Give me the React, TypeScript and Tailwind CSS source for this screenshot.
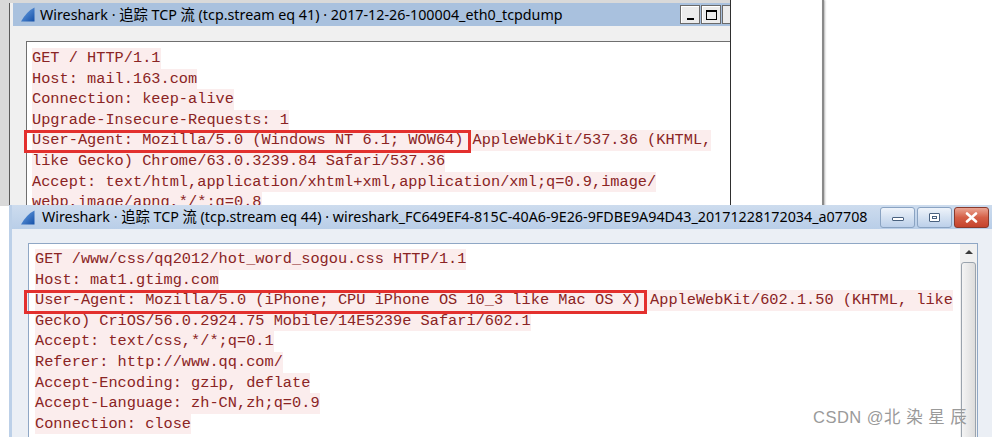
import React from "react";

const firstLines = [
  "GET / HTTP/1.1",
  "Host: mail.163.com",
  "Connection: keep-alive",
  "Upgrade-Insecure-Requests: 1",
  "User-Agent: Mozilla/5.0 (Windows NT 6.1; WOW64) AppleWebKit/537.36 (KHTML,",
  "like Gecko) Chrome/63.0.3239.84 Safari/537.36",
  "Accept: text/html,application/xhtml+xml,application/xml;q=0.9,image/",
  "webp,image/apng,*/*;q=0.8",
];

const secondLines = [
  "GET /www/css/qq2012/hot_word_sogou.css HTTP/1.1",
  "Host: mat1.gtimg.com",
  "User-Agent: Mozilla/5.0 (iPhone; CPU iPhone OS 10_3 like Mac OS X) AppleWebKit/602.1.50 (KHTML, like",
  "Gecko) CriOS/56.0.2924.75 Mobile/14E5239e Safari/602.1",
  "Accept: text/css,*/*;q=0.1",
  "Referer: http://www.qq.com/",
  "Accept-Encoding: gzip, deflate",
  "Accept-Language: zh-CN,zh;q=0.9",
  "Connection: close",
];

function SharkFin() {
  return (
    <svg width="15" height="15" viewBox="0 0 15 15">
      <defs>
        <linearGradient id="fin" x1="0" y1="0" x2="1" y2="1">
          <stop offset="0" stopColor="#6fa6e6" />
          <stop offset="1" stopColor="#1550a8" />
        </linearGradient>
      </defs>
      <path d="M1 14.5 L14.5 14.5 L14.5 0.5 Q7 4 1 14.5 Z" fill="url(#fin)" />
    </svg>
  );
}

function Stream({ lines }: { lines: string[] }) {
  return (
    <div className="font-['Liberation_Mono',monospace] text-[15.3px] leading-[20.6px] text-[#8a2424]">
      {lines.map((l, i) => (
        <div key={i} className="w-fit whitespace-pre bg-[#fbeded]">
          {l}
        </div>
      ))}
    </div>
  );
}

function ClassicButton({ kind }: { kind: "min" | "max" }) {
  return (
    <div className="flex h-[19px] w-[20px] items-center justify-center border border-[#6a6a6a] bg-[#ececec] shadow-[inset_1px_1px_0_#ffffff]">
      {kind === "min" ? (
        <div className="mt-[9px] h-[2px] w-[7px] bg-black" />
      ) : (
        <div className="h-[10px] w-[11px] border border-t-2 border-black" />
      )}
    </div>
  );
}

function AeroButton({ kind }: { kind: "min" | "max" | "close" }) {
  if (kind === "close") {
    return (
      <div className="flex h-[21px] w-[35px] items-center justify-center rounded-[3px] border border-[#8a3a2c] bg-linear-to-b from-[#e9a493] via-[#d45f47] to-[#c5432d]">
        <svg width="13" height="11" viewBox="0 0 13 11">
          <path d="M2 1.5 L11 9.5 M11 1.5 L2 9.5" stroke="#ffffff" strokeWidth="2.6" strokeLinecap="round" />
        </svg>
      </div>
    );
  }
  return (
    <div className="flex h-[21px] w-[35px] items-center justify-center rounded-[3px] border border-[#8aa3c2] bg-linear-to-b from-[#eef3fa] via-[#d4e1f1] to-[#bcd0ea]">
      {kind === "min" ? (
        <div className="mt-[3px] h-[4px] w-[12px] rounded-[1px] border border-[#49617f] bg-white" />
      ) : (
        <div className="flex h-[9px] w-[11px] items-center justify-center rounded-[1px] border border-[#49617f] bg-white">
          <div className="h-[3px] w-[5px] border border-[#49617f]" />
        </div>
      )}
    </div>
  );
}

export default function App() {
  return (
    <div className="relative h-[437px] w-[998px] overflow-hidden bg-white">
      {/* first window, cropped at its right edge and by the second window */}
      <div className="absolute left-0 top-0 h-[206px] w-[731px] overflow-hidden border-r border-[#2f2f2f] bg-[#d9d9d9] pl-[9px] pt-[3px]">
        <div className="h-[240px] border-l border-[#5a5a5a] bg-[#f0f0f0]">
          <div className="ml-[3px] flex h-[23px] items-center bg-[#a9c1de] pl-[7px]">
            <SharkFin />
            <span className="ml-[5px] whitespace-nowrap font-['Noto_Sans','Noto_Sans_CJK_SC',sans-serif] text-[14.3px] text-black">
              Wireshark · 追踪 TCP 流 (tcp.stream eq 41) · 2017-12-26-100004_eth0_tcpdump
            </span>
            <div className="ml-auto flex shrink-0 gap-[1px]">
              <ClassicButton kind="min" />
              <ClassicButton kind="max" />
              <div className="h-[19px] w-[8px] border-y border-l border-[#6a6a6a] bg-[#ececec]" />
            </div>
          </div>
          <div className="pl-[16px] pt-[15px]">
            <div className="h-[240px] w-[760px] border border-[#6f6f6f] bg-white pl-[5px] pt-[6px]">
              <Stream lines={firstLines} />
            </div>
          </div>
        </div>
      </div>

      {/* outline of the first picture, lying over the second window */}
      <div className="absolute left-[822px] top-0 h-[293px] w-[2px] bg-[#8a8a8a] shadow-[1px_0_2px_#b0b0b0]" />
      <div className="absolute left-[120px] top-[291px] h-[2px] w-[704px] bg-linear-to-r from-transparent via-[#b8b8b8] to-[#7a7a7a]" />

      {/* second window */}
      <div className="absolute left-[9px] top-[205px] h-[240px] w-[983px] border-l-[3px] border-[#bcd0e8] bg-[#ebeff5]">
        <div className="flex h-[24px] items-center bg-linear-to-b from-[#cddcee] to-[#b9cee8] pl-[8px] pr-[3px]">
          <SharkFin />
          <span className="ml-[7px] whitespace-nowrap font-['Noto_Sans','Noto_Sans_CJK_SC',sans-serif] text-[14.3px] text-black">
            Wireshark · 追踪 TCP 流 (tcp.stream eq 44) · wireshark_FC649EF4-815C-40A6-9E26-9FDBE9A94D43_20171228172034_a07708
          </span>
          <div className="ml-auto flex shrink-0 gap-[2px]">
            <AeroButton kind="min" />
            <AeroButton kind="max" />
            <AeroButton kind="close" />
          </div>
        </div>
        <div className="pl-[16px] pr-[14px] pt-[14px]">
          <div className="flex h-[220px] border border-[#8fa7c5] bg-white">
            <div className="flex-1 pl-[6px] pt-[5px]">
              <Stream lines={secondLines} />
            </div>
            <div className="flex w-[17px] flex-col items-center bg-[#f0f0f0]">
              <div className="mt-[6px] h-0 w-0 border-x-[4px] border-b-[4px] border-x-transparent border-b-[#3a3a3a]" />
              <div className="mt-[8px] h-[190px] w-[15px] rounded-t-[3px] border border-[#9aa3ad] bg-linear-to-r from-[#f4f4f4] to-[#dcdcdc]" />
            </div>
          </div>
        </div>
      </div>

      {/* red highlight boxes */}
      <div className="absolute left-[24px] top-[130px] h-[23px] w-[447px] border-[3px] border-[#e3302e]" />
      <div className="absolute left-[24px] top-[290px] h-[24px] w-[623px] border-[3px] border-[#e3302e]" />

      {/* watermark */}
      <div className="absolute left-[813px] top-[405px] whitespace-nowrap font-['Liberation_Sans','Noto_Sans_CJK_SC',sans-serif] text-[16.5px] tracking-[0.5px] text-[#9a9a9a]">
        CSDN @北 染 星 辰
      </div>
    </div>
  );
}
